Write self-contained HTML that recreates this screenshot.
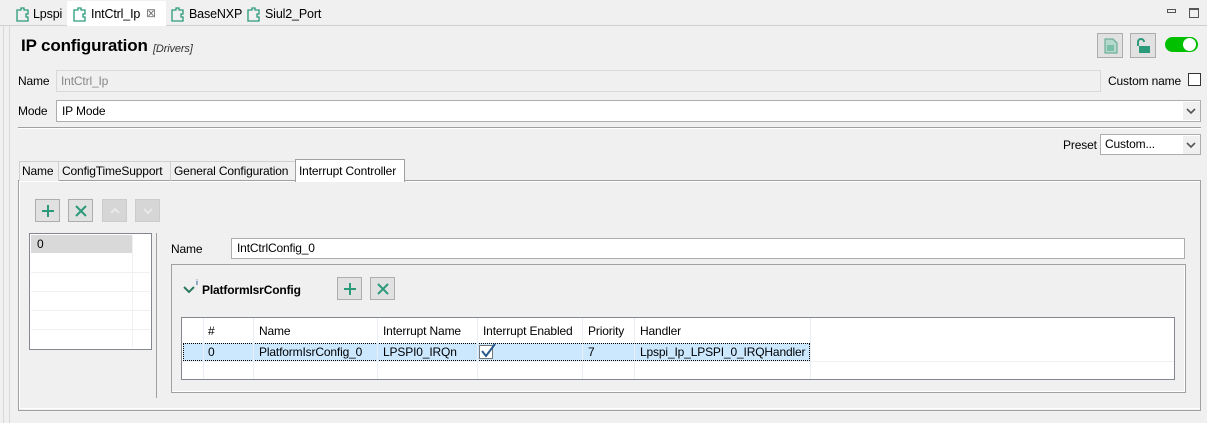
<!DOCTYPE html>
<html><head><meta charset="utf-8"><style>
*{box-sizing:border-box;margin:0;padding:0}
body{width:1207px;height:423px;background:#f0f0f0;font-family:"Liberation Sans",sans-serif;font-size:12px;color:#000;position:relative;overflow:hidden;letter-spacing:-0.15px}
.a{position:absolute}
.t{position:absolute;white-space:nowrap}
.btn{position:absolute;width:25px;height:23px;background:#e1e1e1;border:1px solid #adadad}
.btn svg{position:absolute;left:5px;top:4px}
.cell{position:absolute;top:0;height:100%;border-left:1px solid #e8eef4}
</style></head><body>
<div class="a" style="left:3px;top:26px;width:1px;height:397px;background:#d8d8d8"></div>
<div class="a" style="left:9px;top:26px;width:1px;height:397px;background:#d8d8d8"></div>
<div class="a" style="left:0;top:0;width:1207px;height:26px;background:#f0f0f0;border-bottom:1px solid #d0d0d0"></div>
<div class="a" style="left:67px;top:1px;width:99px;height:25px;background:#fff"></div>
<svg class="a" style="left:16px;top:7px" width="14" height="15" viewBox="0 0 14 15"><path d="M1 3h4v-2h3v2h4v4h-2v3h2v4h-11z" fill="none" stroke="#2a9a7a" stroke-width="1.3"/></svg>
<div class="t" style="left:33px;top:7px;font-size:12.5px">Lpspi</div>
<svg class="a" style="left:73px;top:7px" width="14" height="15" viewBox="0 0 14 15"><path d="M1 3h4v-2h3v2h4v4h-2v3h2v4h-11z" fill="none" stroke="#2a9a7a" stroke-width="1.3"/></svg>
<div class="t" style="left:91px;top:7px;font-size:12.5px">IntCtrl_Ip</div>
<div class="t" style="left:146px;top:6px;color:#777;font-size:12px">⊠</div>
<svg class="a" style="left:171px;top:7px" width="14" height="15" viewBox="0 0 14 15"><path d="M1 3h4v-2h3v2h4v4h-2v3h2v4h-11z" fill="none" stroke="#2a9a7a" stroke-width="1.3"/></svg>
<div class="t" style="left:189px;top:7px;font-size:12.5px">BaseNXP</div>
<svg class="a" style="left:247px;top:7px" width="14" height="15" viewBox="0 0 14 15"><path d="M1 3h4v-2h3v2h4v4h-2v3h2v4h-11z" fill="none" stroke="#2a9a7a" stroke-width="1.3"/></svg>
<div class="t" style="left:265px;top:7px;font-size:12.5px">Siul2_Port</div>
<div class="a" style="left:1167px;top:9px;width:9px;height:4px;border:1px solid #555"></div>
<div class="a" style="left:1189px;top:8px;width:10px;height:10px;border:1px solid #555;border-top-width:2px"></div>
<div class="t" style="left:21px;top:36px;font-size:17px;font-weight:bold">IP configuration</div>
<div class="t" style="left:153px;top:43px;font-size:11px;font-style:italic;color:#333">[Drivers]</div>
<div class="btn" style="left:1097px;top:33px;width:26px;height:25px"><svg width="14" height="16" viewBox="0 0 14 16" style="left:6px"><path d="M1 1h8l4 4v10h-12z" fill="#b5d9cc" stroke="#5aa58c"/><rect x="3" y="7" width="7" height="6" fill="#7cbfa8"/></svg></div>
<div class="btn" style="left:1130px;top:33px;width:26px;height:25px"><svg width="16" height="16" viewBox="0 0 16 16" style="left:4px"><path d="M3 8V4a3 3 0 0 1 6 0" fill="none" stroke="#2a9a7a" stroke-width="2"/><rect x="4" y="8" width="11" height="7" fill="#2a9a7a"/></svg></div>
<div class="a" style="left:1165px;top:37px;width:33px;height:15px;border-radius:8px;background:#00c000"></div>
<div class="a" style="left:1183px;top:38px;width:13px;height:13px;border-radius:7px;background:#fff"></div>
<div class="t" style="left:18px;top:74px">Name</div>
<div class="a" style="left:56px;top:70px;width:1045px;height:22px;border:1px solid #d9d9d9;background:#f0f0f0"></div>
<div class="t" style="left:61px;top:74px;color:#888">IntCtrl_Ip</div>
<div class="t" style="left:1108px;top:74px">Custom name</div>
<div class="a" style="left:1188px;top:73px;width:13px;height:13px;border:1px solid #333;background:#fff"></div>
<div class="t" style="left:18px;top:104px">Mode</div>
<div class="a" style="left:56px;top:100px;width:1145px;height:22px;border:1px solid #adadad;background:#fff"></div>
<div class="t" style="left:62px;top:104px">IP Mode</div>
<div class="a" style="left:1183px;top:102px;width:17px;height:18px;background:#f0f0f0"></div>
<svg class="a" style="left:1186px;top:107px" width="10" height="8"><path d="M1 2l4 4 4-4" fill="none" stroke="#555" stroke-width="1.6"/></svg>
<div class="a" style="left:18px;top:127px;width:1183px;height:1px;background:#a0a0a0"></div>
<div class="a" style="left:18px;top:128px;width:1183px;height:1px;background:#fff"></div>
<div class="t" style="left:1063px;top:138px">Preset</div>
<div class="a" style="left:1100px;top:134px;width:101px;height:21px;border:1px solid #adadad;background:#fff"></div>
<div class="t" style="left:1105px;top:137px">Custom...</div>
<div class="a" style="left:1183px;top:136px;width:17px;height:18px;background:#f0f0f0"></div>
<svg class="a" style="left:1186px;top:141px" width="10" height="8"><path d="M1 2l4 4 4-4" fill="none" stroke="#555" stroke-width="1.6"/></svg>
<div class="a" style="left:18px;top:180px;width:1183px;height:231px;border:1px solid #a0a0a0;background:#f0f0f0"></div>
<div class="a" style="left:19px;top:181px;width:1181px;height:228px;border:1px solid #fff;border-right:0"></div>
<div class="a" style="left:19px;top:161px;width:40px;height:20px;border:1px solid #d0d0d0;border-bottom:0;background:#f0f0f0"></div>
<div class="t" style="left:22px;top:164px">Name</div>
<div class="a" style="left:58px;top:161px;width:113px;height:20px;border:1px solid #d0d0d0;border-bottom:0"></div>
<div class="t" style="left:62px;top:164px">ConfigTimeSupport</div>
<div class="a" style="left:170px;top:161px;width:126px;height:20px;border:1px solid #d0d0d0;border-bottom:0"></div>
<div class="t" style="left:174px;top:164px">General Configuration</div>
<div class="a" style="left:295px;top:159px;width:110px;height:23px;border:1px solid #a0a0a0;border-bottom:0;background:#fff"></div>
<div class="t" style="left:299px;top:164px">Interrupt Controller</div>
<div class="btn" style="left:35px;top:199px"><svg width="14" height="14"><path d="M7 1v12M1 7h12" stroke="#2a9a7a" stroke-width="2"/></svg></div>
<div class="btn" style="left:68px;top:199px"><svg width="14" height="14"><path d="M2 2l10 10M12 2L2 12" stroke="#2a9a7a" stroke-width="2"/></svg></div>
<div class="btn" style="left:102px;top:199px;background:#d6d6d6;border-color:#ccc"><svg width="14" height="14"><path d="M3 9l4-4 4 4" fill="none" stroke="#e8e8e8" stroke-width="2"/></svg></div>
<div class="btn" style="left:135px;top:199px;background:#d6d6d6;border-color:#ccc"><svg width="14" height="14"><path d="M3 5l4 4 4-4" fill="none" stroke="#e8e8e8" stroke-width="2"/></svg></div>
<div class="a" style="left:29px;top:233px;width:123px;height:117px;border:1px solid #828790;background:#fff"></div>
<div class="a" style="left:31px;top:235px;width:101px;height:18px;background:#d9d9d9"></div>
<div class="a" style="left:132px;top:235px;width:1px;height:112px;background:#f0f0f0"></div>
<div class="a" style="left:31px;top:272px;width:119px;height:1px;background:#f0f0f0"></div>
<div class="a" style="left:31px;top:291px;width:119px;height:1px;background:#f0f0f0"></div>
<div class="a" style="left:31px;top:310px;width:119px;height:1px;background:#f0f0f0"></div>
<div class="a" style="left:31px;top:329px;width:119px;height:1px;background:#f0f0f0"></div>
<div class="t" style="left:37px;top:237px">0</div>
<div class="a" style="left:156px;top:233px;width:1px;height:165px;background:#a0a0a0"></div>
<div class="t" style="left:171px;top:242px">Name</div>
<div class="a" style="left:231px;top:238px;width:954px;height:21px;border:1px solid #adadad;background:#fff"></div>
<div class="t" style="left:237px;top:241px">IntCtrlConfig_0</div>
<div class="a" style="left:171px;top:264px;width:1015px;height:129px;border:1px solid #a0a0a0;background:#f0f0f0"></div>
<div class="a" style="left:172px;top:265px;width:1013px;height:127px;border:1px solid #fff;border-top:0;border-left:0"></div>
<svg class="a" style="left:183px;top:285px" width="12" height="10"><path d="M1 2l5 5 5-5" fill="none" stroke="#2a7a60" stroke-width="2"/></svg>
<div class="t" style="left:196px;top:280px;font-size:7px;color:#2a5aa0;font-weight:bold">i</div>
<div class="t" style="left:202px;top:283px;font-weight:bold;font-size:12px">PlatformIsrConfig</div>
<div class="btn" style="left:337px;top:277px"><svg width="14" height="14"><path d="M7 1v12M1 7h12" stroke="#2a9a7a" stroke-width="2"/></svg></div>
<div class="btn" style="left:370px;top:277px"><svg width="14" height="14"><path d="M2 2l10 10M12 2L2 12" stroke="#2a9a7a" stroke-width="2"/></svg></div>
<div class="a" style="left:181px;top:317px;width:994px;height:63px;border:1px solid #828790;background:#fff">
 <div class="a" style="left:1px;top:25px;width:627px;height:18px;background:#cce8ff;border:1px dotted #000"></div>
 <div class="a" style="left:0;top:43px;width:992px;height:1px;background:#f0f0f0"></div>
 <div class="cell" style="left:21px"></div><div class="cell" style="left:71px"></div><div class="cell" style="left:195px"></div><div class="cell" style="left:295px"></div><div class="cell" style="left:400px"></div><div class="cell" style="left:452px"></div><div class="cell" style="left:628px"></div>
</div>
<div class="t" style="left:208px;top:324px">#</div>
<div class="t" style="left:259px;top:324px">Name</div>
<div class="t" style="left:383px;top:324px">Interrupt Name</div>
<div class="t" style="left:483px;top:324px">Interrupt Enabled</div>
<div class="t" style="left:588px;top:324px">Priority</div>
<div class="t" style="left:640px;top:324px">Handler</div>
<div class="t" style="left:208px;top:345px">0</div>
<div class="t" style="left:259px;top:345px">PlatformIsrConfig_0</div>
<div class="t" style="left:383px;top:345px">LPSPI0_IRQn</div>
<div class="a" style="left:479px;top:345px;width:14px;height:14px;border:1px solid #777;background:#fff"></div>
<svg class="a" style="left:479px;top:342px" width="18" height="17"><path d="M3 9l4 5 9-12" fill="none" stroke="#2a5a8a" stroke-width="2"/></svg>
<div class="t" style="left:588px;top:345px">7</div>
<div class="t" style="left:640px;top:345px">Lpspi_Ip_LPSPI_0_IRQHandler</div>
</body></html>
